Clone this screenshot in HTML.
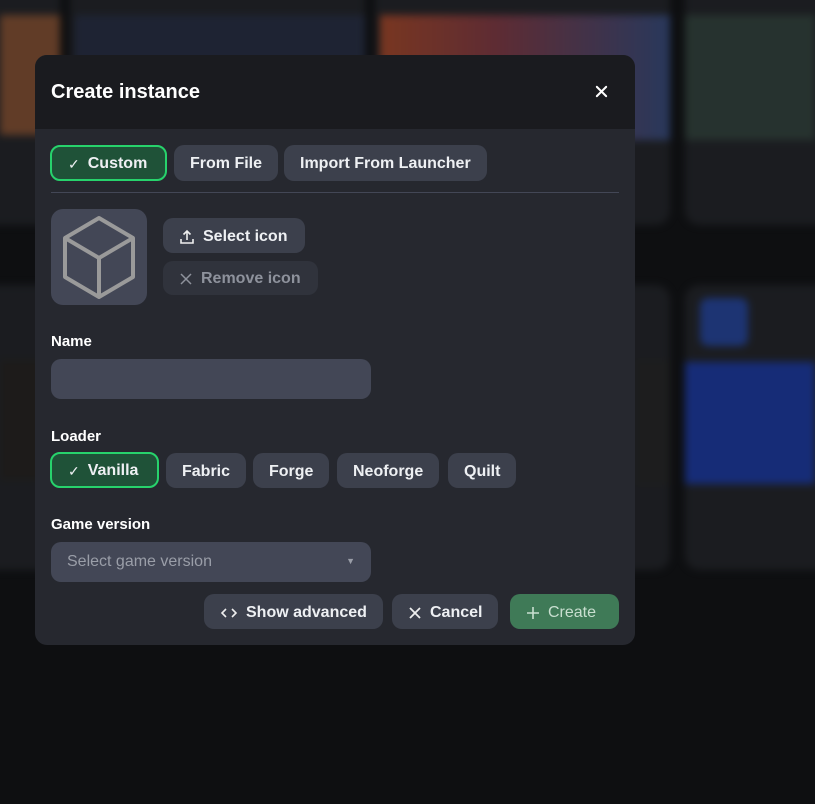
<!DOCTYPE html>
<html><head><style>
*{box-sizing:border-box;margin:0;padding:0}
body{width:815px;height:804px;background:#0e0f11;font-family:"Liberation Sans",sans-serif;position:relative;overflow:hidden}
.bg{position:absolute;inset:0;filter:blur(4px);opacity:.55}
.c{position:absolute;background:#26282d;border-radius:14px}
.im{position:absolute}
.m{position:absolute;left:35px;top:55px;width:600px;height:590px;background:#26282f;border-radius:12px;overflow:hidden}
.hd{height:74px;background:#1a1b1f;color:#fff;font-weight:bold;font-size:20px;padding:26px 16px}
.x{position:absolute;right:27px;top:30px}
.btn{position:absolute;height:36px;border-radius:10px;background:#3c404c;color:#eef0f3;font-weight:bold;font-size:16px;display:flex;align-items:center;padding:2px 16px 0;gap:8px}
.sel{background:#1f5238;border:2px solid #27d36c}
.lbl{position:absolute;left:16px;color:#fff;font-weight:bold;font-size:15px}
.inp{position:absolute;left:16px;width:320px;height:40px;background:#434756;border-radius:10px}
</style></head><body>
<div class="bg">
<div class="c" style="left:-20px;top:-20px;width:80px;height:245px"></div>
<div class="c" style="left:70px;top:-20px;width:295px;height:245px"></div>
<div class="c" style="left:375px;top:-20px;width:295px;height:245px"></div>
<div class="c" style="left:685px;top:-20px;width:150px;height:245px"></div>
<div class="im" style="left:0;top:15px;width:60px;height:120px;background:#a5623a"></div>
<div class="im" style="left:75px;top:15px;width:290px;height:125px;background:#2c3550"></div>
<div class="im" style="left:380px;top:15px;width:290px;height:125px;background:linear-gradient(90deg,#d0572e,#a04450 40%,#3f5a99)"></div>
<div class="im" style="left:685px;top:15px;width:130px;height:125px;background:#3b5048"></div>
<div class="c" style="left:-20px;top:285px;width:80px;height:285px"></div>
<div class="c" style="left:70px;top:285px;width:295px;height:285px"></div>
<div class="c" style="left:375px;top:285px;width:295px;height:285px"></div>
<div class="c" style="left:685px;top:285px;width:150px;height:285px"></div>
<div class="im" style="left:0;top:360px;width:60px;height:120px;background:#2a2622"></div>
<div class="im" style="left:635px;top:360px;width:35px;height:125px;background:#2a2a2a"></div>
<div class="im" style="left:700px;top:298px;width:48px;height:48px;background:#2a53c4;border-radius:8px"></div>
<div class="im" style="left:685px;top:362px;width:130px;height:122px;background:#1e45cc"></div>
</div>
<div class="m">
<div class="hd">Create instance</div>
<svg class="x" width="13" height="13" viewBox="0 0 14 14"><path d="M2 2L12 12M12 2L2 12" stroke="#fff" stroke-width="2.2" stroke-linecap="round"/></svg>
<div class="btn sel" style="left:15px;top:90px;width:117px"><span style="font-size:14px;font-weight:normal">✓</span>Custom</div>
<div class="btn" style="left:139px;top:90px">From File</div>
<div class="btn" style="left:249px;top:90px">Import From Launcher</div>
<div style="position:absolute;left:16px;top:137px;width:568px;height:1px;background:#434756"></div>
<div style="position:absolute;left:16px;top:154px;width:96px;height:96px;background:#434756;border-radius:12px">
<svg width="96" height="96" viewBox="0 0 96 96"><path d="M48 9L82 29V68L48 88L14 68V29Z M14 29L48 49L82 29 M48 49V88" fill="none" stroke="#9a9a9a" stroke-width="4" stroke-linejoin="round"/></svg></div>
<div class="btn" style="left:128px;top:163px;height:35px;width:142px">
<svg width="16" height="16" viewBox="0 0 16 16" fill="none" stroke="#eee" stroke-width="1.6"><path d="M8 11V2M4.5 5.5L8 2l3.5 3.5M2 10v4h12v-4"/></svg>Select icon</div>
<div class="btn" style="left:128px;top:206px;height:34px;width:155px;background:#30333c;color:#8e929c">
<svg width="14" height="14" viewBox="0 0 14 14"><path d="M2 2L12 12M12 2L2 12" stroke="#8e929c" stroke-width="1.5"/></svg>Remove icon</div>
<div class="lbl" style="top:278px">Name</div>
<div class="inp" style="top:304px"></div>
<div class="lbl" style="top:373px">Loader</div>
<div class="btn sel" style="left:15px;top:397px;width:109px"><span style="font-size:14px;font-weight:normal">✓</span>Vanilla</div>
<div class="btn" style="left:131px;top:398px;height:35px">Fabric</div>
<div class="btn" style="left:218px;top:398px;height:35px">Forge</div>
<div class="btn" style="left:302px;top:398px;height:35px">Neoforge</div>
<div class="btn" style="left:413px;top:398px;height:35px">Quilt</div>
<div class="lbl" style="top:461px">Game version</div>
<div class="inp" style="top:487px;color:#9a9ea8;font-size:16px;padding:11px 16px">Select game version<span style="position:absolute;right:16px;top:14px;font-size:9px">▼</span></div>
<div class="btn" style="left:169px;top:539px;height:35px">
<svg width="18" height="14" viewBox="0 0 18 14" fill="none" stroke="#eee" stroke-width="1.6"><path d="M6 3L2 7l4 4M12 3l4 4-4 4"/></svg>Show advanced</div>
<div class="btn" style="left:357px;top:539px;height:35px">
<svg width="14" height="14" viewBox="0 0 14 14"><path d="M2 2L12 12M12 2L2 12" stroke="#eee" stroke-width="1.8"/></svg>Cancel</div>
<div class="btn" style="left:475px;top:539px;height:35px;width:109px;background:#3f7a57;color:#c9dfd0;font-weight:normal">
<svg width="14" height="14" viewBox="0 0 14 14"><path d="M7 1V13M1 7H13" stroke="#c9dfd0" stroke-width="1.6"/></svg>Create</div>
</div>
</body></html>
